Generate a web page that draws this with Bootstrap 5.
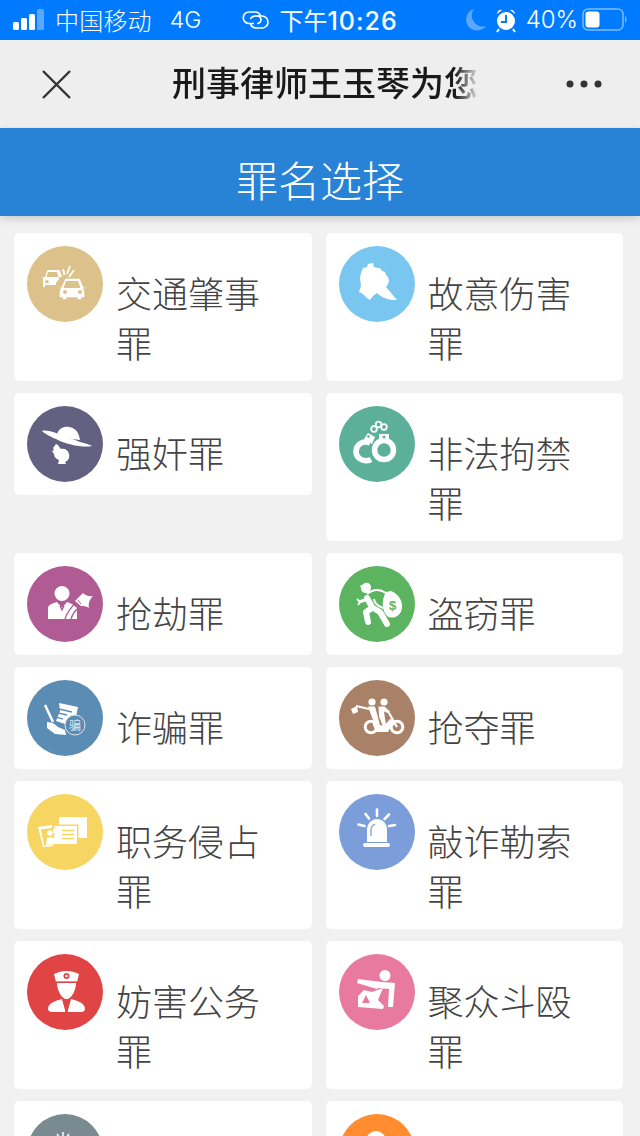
<!DOCTYPE html>
<html lang="zh-CN">
<head>
    <meta charset="UTF-8">
    <meta name="viewport" content="width=device-width, initial-scale=1.0">
    <title>罪名选择</title>
    <link href="https://cdn.jsdelivr.net/npm/bootstrap@5.3.0/dist/css/bootstrap.min.css" rel="stylesheet">
    <style>
        html, body { height: 1136px; overflow: hidden; }
        body { background-color: #f1f1f1; font-family: "Noto Sans CJK SC", "Liberation Sans", sans-serif; }
        .status-bar { height: 40px; background-color: #007aff; color: #fff; font-size: 24px; line-height: 40px; padding-left: 13px; white-space: nowrap; }
        .status-bar .latin { font-family: Inter, "Liberation Sans", sans-serif; }
        .carrier { margin-left: 9px; letter-spacing: .2px; font-weight: 300; }
        .net { margin-left: 18px; font-size: 23px; font-weight: 300; }
        .link-ico { margin-left: 41px; }
        .clock { margin-left: 10px; font-weight: 400; }
        .clock .latin { font-weight: 500; font-size: 25px; letter-spacing: 1px; }
        .moon-ico { margin-left: 68px; }
        .alarm-ico { margin-left: 9px; }
        .batt-text { margin-left: 9px; font-size: 24px; font-weight: 300; }
        .batt-ico { margin-left: 4px; }
        .title-bar { height: 88px; background-color: #eee; padding-left: 41px; }
        .title-text { margin: -4px 0 0 100px; width: 311px; font-size: 34px; line-height: 44px; font-weight: 500; color: #1a1a1a; white-space: nowrap; -webkit-mask-image: linear-gradient(to right, #000 91%, transparent 99%); mask-image: linear-gradient(to right, #000 91%, transparent 99%); }
        .dots-ico { margin-left: 83px; }
        .page-head { height: 88px; background-color: #2882d6; color: #fff; font-size: 42px; font-weight: 300; line-height: 102px; text-align: center; box-shadow: 0 3px 8px rgba(0, 0, 0, .16); position: relative; }
        .crime-list { padding: 17px 17px 0 14px; }
        .crime-list .row { --bs-gutter-x: 14px; --bs-gutter-y: 0; }
        .crime-card { border: 0; border-radius: 5px; background-color: #fff; padding: 13px 13px 12.5px; margin-bottom: 12.5px; }
        .crime-ico { width: 76px; height: 76px; flex: none; display: block; }
        .crime-name { width: 170px; margin: 20.5px 0 1.5px 13px; font-size: 36px; line-height: 50px; font-weight: 300; color: #444; }
    </style>
</head>
<body>

<div class="status-bar d-flex align-items-center">
    <svg width="33" height="22" viewBox="0 0 33 22"><g fill="#fff"><rect x="0" y="13" width="6" height="8" rx="1.5"/><rect x="8" y="9" width="6" height="12" rx="1.5"/><rect x="16" y="5" width="6" height="16" rx="1.5"/></g><rect x="24" y="0" width="7" height="21" rx="1.5" fill="#5aa8ff"/></svg>
    <span class="carrier">中国移动</span>
    <span class="net latin">4G</span>
    <svg class="link-ico" width="27" height="18" viewBox="0 0 27 18" fill="none" stroke="#fff" stroke-width="1.700"><path d="M12 12.500H7a5.700 5.700 0 0 1 0-11.500h6a5.700 5.700 0 0 1 5.500 4"/><path d="M15 5h5a5.800 5.800 0 0 1 0 12h-6a5.700 5.700 0 0 1-5.500-4.500"/><path d="M8.500 8A5 5 0 0 1 13 5h2a4 4 0 0 1 4 4 4 4 0 0 1-4 3.500"/></svg>
    <span class="clock">下午<span class="latin">10:26</span></span>
    <svg class="moon-ico" width="20" height="24" viewBox="0 0 20 24"><path d="M8 1a11 11 0 1 0 12 17A11 11 0 0 1 8 1z" fill="#5aa8ff"/></svg>
    <svg class="alarm-ico" width="22" height="26" viewBox="0 0 22 26"><circle cx="11" cy="14" r="9" fill="#fff"/><path d="M2 7a4 4 0 0 1 5-4zM20 7a4 4 0 0 0-5-4z" fill="#fff"/><path d="M11 8v7h-5" fill="none" stroke="#007aff" stroke-width="2"/><path d="M4 22l-2 3M18 22l2 3" stroke="#fff" stroke-width="2"/></svg>
    <span class="batt-text latin">40%</span>
    <svg class="batt-ico" width="46" height="24" viewBox="0 0 46 24"><rect x="1" y="1" width="40" height="21" rx="5" fill="none" stroke="#7fbcff" stroke-width="1.500"/><rect x="3.500" y="3.500" width="14" height="16" rx="3" fill="#fff"/><path d="M43 8c2 1 2 6 0 7z" fill="#7fbcff"/></svg>
</div>

<div class="title-bar d-flex align-items-center">
    <svg width="31" height="31" viewBox="0 0 31 31"><path d="M2 2l27 27M29 2L2 29" stroke="#333" stroke-width="2.400"/></svg>
    <div class="title-text">刑事律师王玉琴为您</div>
    <svg class="dots-ico" width="36" height="8" viewBox="0 0 36 8"><g fill="#333"><circle cx="4" cy="4" r="3.500"/><circle cx="18" cy="4" r="3.500"/><circle cx="32" cy="4" r="3.500"/></g></svg>
</div>

<div class="page-head">罪名选择</div>

<div class="crime-list">
    <div class="row align-items-start">

        <div class="col-6">
            <div class="card crime-card flex-row">
                <svg class="crime-ico" viewBox="0 0 76 76"><circle cx="38" cy="38" r="38" fill="#dcc28a"/>
                    <path fill="#fff" fill-rule="evenodd" d="M18 31l2-6c0-1 1-1 2-1h9c1 0 2 0 2 1l2 6h-3v2l-3 4v2h-11v2h-2v-9l-1-1zM21 26l-1.500 5h12l-1.500-5zM20 34a1.800 1.800 0 1 0 0 3.600 1.800 1.800 0 0 0 0-3.600z"/>
                    <path fill="#fff" stroke="#dcc28a" stroke-width="1.500" d="M31 41h3l3-7c0-1 1-2 2-2h13c1 0 2 1 2 2l3 7h3v2h-3l1 2v7h-3v2h-5v-2H40v2h-5v-2h-3v-7l1-2h-2z"/>
                    <path fill="#dcc28a" d="M39 35l-2.500 7h17l-2.500-7z"/>
                    <circle cx="38" cy="46" r="2" fill="#dcc28a"/><circle cx="53" cy="46" r="2" fill="#dcc28a"/>
                    <path d="M36 23l1.500 6M43 20l-3 8M47 24l-5 7" stroke="#fff" stroke-width="1.800" fill="none"/></svg>
                <div class="crime-name">交通肇事罪</div>
            </div>
        </div>
        <div class="col-6">
            <div class="card crime-card flex-row">
                <svg class="crime-ico" viewBox="0 0 76 76"><circle cx="38" cy="38" r="38" fill="#79c7f0"/>
                    <path fill="#fff" d="M24 22l4-1 1-3 5-1 1 4 4 1 2 0 2 3 3 1 1 3 2 2 1 4-1 3-2 3 11 13-5 0c-6-1-11-3-15-7l-4 3-3 4-3-2-4-4-4-2 2-6-1-8 1-5z"/></svg>
                <div class="crime-name">故意伤害罪</div>
            </div>
        </div>

        <div class="col-6">
            <div class="card crime-card flex-row">
                <svg class="crime-ico" viewBox="0 0 76 76"><circle cx="38" cy="38" r="38" fill="#646082"/>
                    <path fill="#fff" d="M30 29c1-7 8-9 12-8 7 1 10 6 11 13-8-1-16-2-23-5z"/>
                    <path fill="#fff" d="M15 25c2-1 9 0 14 2 8 3 17 6 24 9 5 1 10 3 12 4-8 2-25-1-36-7-7-3-12-6-14-8z"/>
                    <path fill="#fff" d="M26 42l3-4 2 1 2 3 1 1c4-1 7 1 8 5 1 4-1 7-4 8l1 2h-8l1-4c-3-1-5-3-5-6l-2-3 2-1z"/></svg>
                <div class="crime-name">强奸罪</div>
            </div>
        </div>
        <div class="col-6">
            <div class="card crime-card flex-row">
                <svg class="crime-ico" viewBox="0 0 76 76"><circle cx="38" cy="38" r="38" fill="#5cb09a"/>
                    <path d="M31 37c-8-3-14 2-14 8.500s6 10 12 9c1 0 2-.5 3-1" fill="none" stroke="#fff" stroke-width="5.500"/>
                    <path fill="#fff" d="M25 33l4-6 7 4-3 7z"/>
                    <circle cx="45" cy="44" r="9.500" fill="none" stroke="#fff" stroke-width="5.500"/>
                    <path fill="#fff" d="M40 28h10v8H40z"/><circle cx="45" cy="31" r="1.500" fill="#5cb09a"/><circle cx="29.500" cy="30.500" r="1.300" fill="#5cb09a"/>
                    <g fill="none" stroke="#fff" stroke-width="1.800"><circle cx="35" cy="23" r="2.800"/><circle cx="39.500" cy="18.500" r="2.800"/><circle cx="45" cy="21" r="2.800"/></g></svg>
                <div class="crime-name">非法拘禁罪</div>
            </div>
        </div>

        <div class="col-6">
            <div class="card crime-card flex-row">
                <svg class="crime-ico" viewBox="0 0 76 76"><circle cx="38" cy="38" r="38" fill="#b05b93"/>
                    <circle cx="35" cy="27.500" r="7.500" fill="#fff"/>
                    <path fill="#fff" d="M21 53V42c0-3 5-5 9-6l5 6 5-6 5 2 5 4v11z"/>
                    <path d="M33 40l2 4 2-4M38 53c2-7 7-13 13-18M44 53c1-4 3-7 6-10" stroke="#b05b93" stroke-width="1.300" fill="none"/>
                    <path fill="#fff" d="M48 35l8-8c2 2 6 4 10 3-3 3-5 7-4 12-3-2-6-2-8-2z"/>
                    <path d="M51 34l3 4" stroke="#b05b93" stroke-width="1"/></svg>
                <div class="crime-name">抢劫罪</div>
            </div>
        </div>
        <div class="col-6">
            <div class="card crime-card flex-row">
                <svg class="crime-ico" viewBox="0 0 76 76"><circle cx="38" cy="38" r="38" fill="#5cb360"/>
                    <path fill="#fff" d="M21 20l5-3c3-1 6 1 6 4 0 3-2 6-5 6-3 0-5-2-5-5z"/>
                    <path d="M28 32l5 9M33 42l-6 4 2 10M34 42l7 4 7 12" fill="none" stroke="#fff" stroke-width="6" stroke-linecap="round" stroke-linejoin="round"/>
                    <path d="M29 33l-9 3" stroke="#fff" stroke-width="3"/><path d="M18 33l3 3-2 3" stroke="#fff" stroke-width="1.800" fill="none"/>
                    <path d="M28 28c6-5 13-5 19-1" fill="none" stroke="#fff" stroke-width="2"/>
                    <path d="M35 33c0 3 3 7 9 9" fill="none" stroke="#fff" stroke-width="2"/>
                    <path fill="#fff" d="M47 26c-4 6-5 18 1 24 6 4 14 0 15-8 1-8-5-15-11-17z"/>
                    <text x="50" y="44" font-size="13" font-weight="700" fill="#5cb360" font-family="Liberation Sans, sans-serif">$</text></svg>
                <div class="crime-name">盗窃罪</div>
            </div>
        </div>

        <div class="col-6">
            <div class="card crime-card flex-row">
                <svg class="crime-ico" viewBox="0 0 76 76"><circle cx="38" cy="38" r="38" fill="#5b8cb3"/>
                    <path d="M18 25l8 17" stroke="#fff" stroke-width="2.500"/>
                    <path fill="#fff" d="M32 23l19 4-2 10-8 8-12-4 4-10z"/>
                    <path d="M32 29l13 3M31 33l9 2M29 37l7 2" stroke="#5b8cb3" stroke-width="1.300"/>
                    <path fill="#fff" d="M20 42l6 1 5 4 7 3 1 5-11-1-8-6z"/>
                    <circle cx="48" cy="45" r="10" fill="#5b8cb3" stroke="#dbe6ee" stroke-width="1"/>
                    <text x="48" y="49.500" text-anchor="middle" font-size="12" fill="#dbe6ee" font-family="Noto Sans CJK SC, sans-serif">骗</text></svg>
                <div class="crime-name">诈骗罪</div>
            </div>
        </div>
        <div class="col-6">
            <div class="card crime-card flex-row">
                <svg class="crime-ico" viewBox="0 0 76 76"><circle cx="38" cy="38" r="38" fill="#a98166"/>
                    <path fill="#fff" d="M12 29l6-3 1 6-5 2z"/>
                    <circle cx="33" cy="22" r="3.600" fill="#fff"/><circle cx="45" cy="22" r="3.600" fill="#fff"/>
                    <path d="M17 26l13 3" stroke="#fff" stroke-width="2" fill="none"/>
                    <path fill="#fff" d="M29 26.500h7l3 11 2 8-4 1-4-9zM39.500 26.500h6l5.500 5-1 2-5-2 1 7 1 6-3 2-4-10z"/>
                    <path fill="#fff" d="M33 40l4 4 8 2 6-7 3 1 2 5-4 1-3 6H37l-3-7z"/>
                    <circle cx="32" cy="47" r="5.800" fill="none" stroke="#fff" stroke-width="3"/><circle cx="58" cy="47" r="5.800" fill="none" stroke="#fff" stroke-width="3"/>
                    <path d="M50 33l8 14" stroke="#fff" stroke-width="2.200"/></svg>
                <div class="crime-name">抢夺罪</div>
            </div>
        </div>

        <div class="col-6">
            <div class="card crime-card flex-row">
                <svg class="crime-ico" viewBox="0 0 76 76"><circle cx="38" cy="38" r="38" fill="#f6d562"/>
                    <rect x="32" y="23" width="28" height="21" fill="#fff"/>
                    <path fill="#fff" d="M11 33l14-2 .5 2h-1L27 52l-11 1z"/>
                    <rect x="25.500" y="30.500" width="26" height="21" fill="#f6d562"/>
                    <rect x="27" y="32" width="23" height="18" fill="#fff"/>
                    <path fill="#f6d562" d="M14 35.500l11-1.500.5 2 1.500 14-10 1.500z"/>
                    <circle cx="23" cy="39" r="2.800" fill="#fff"/>
                    <path fill="#fff" d="M19 51l1-7 3-1c2 0 4 1 4 2v5z"/>
                    <path fill="#f6d562" d="M27 33.500h3v3h-3zM27 38h3l-3 3z"/>
                    <circle cx="29" cy="37" r="3" fill="#fff"/>
                    <path d="M35 36.500h12M35 40.500h12M35 44.500h12" stroke="#f6d562" stroke-width="1.500"/></svg>
                <div class="crime-name">职务侵占罪</div>
            </div>
        </div>
        <div class="col-6">
            <div class="card crime-card flex-row">
                <svg class="crime-ico" viewBox="0 0 76 76"><circle cx="38" cy="38" r="38" fill="#7b9dd9"/>
                    <path fill="#fff" d="M28 48V36c0-6 4-11 10-11s10 5 10 11v12z"/>
                    <path d="M32 42v-6c0-3 2-5 4-6" stroke="#7b9dd9" stroke-width="1.300" fill="none"/>
                    <rect x="24" y="49" width="27" height="4" rx="2" fill="#fff"/>
                    <path d="M38 15.500v6.500M26.500 20l3.500 4.500M50 20.500L45.500 25M19.500 30.500l6 1.500M56 31l-6 1" stroke="#fff" stroke-width="2.600" stroke-linecap="round"/></svg>
                <div class="crime-name">敲诈勒索罪</div>
            </div>
        </div>

        <div class="col-6">
            <div class="card crime-card flex-row">
                <svg class="crime-ico" viewBox="0 0 76 76"><circle cx="38" cy="38" r="38" fill="#e04444"/>
                    <path fill="#fff" d="M27 20c8-4 17-4 25 0l-2 8H29z"/>
                    <path fill="#fff" d="M30 29h19c0 7-4 14-8 16h-3c-4-2-8-9-8-16z"/>
                    <path d="M29 28h21" stroke="#e04444" stroke-width="1.200"/>
                    <circle cx="39.500" cy="22" r="3" fill="#e04444"/><circle cx="39.500" cy="22" r="1.200" fill="#fff"/>
                    <path fill="#fff" d="M21 55c0-6 7-8 14-10l4 13h-14c-2 0-4-1-4-3zM58 55c0-6-7-8-14-10l-4 13h14c2 0 4-1 4-3z"/>
                    <path d="M36 46l3 12M43 46l-3 12" stroke="#e04444" stroke-width="1"/><path d="M39.500 46v12" stroke="#e04444" stroke-width="1.800"/></svg>
                <div class="crime-name">妨害公务罪</div>
            </div>
        </div>
        <div class="col-6">
            <div class="card crime-card flex-row">
                <svg class="crime-ico" viewBox="0 0 76 76"><circle cx="38" cy="38" r="38" fill="#e8799f"/>
                    <circle cx="46" cy="21.500" r="5.500" fill="#fff"/>
                    <path fill="#fff" d="M19 25l24 3 13 1-2 24h-5l1-18-11-1-1 1-20-6z"/>
                    <path fill="#fff" fill-rule="evenodd" d="M19 53V42l6-6 8 2 11-4-5 12 6 6-1 3zM27 41l-4 8h8z"/></svg>
                <div class="crime-name">聚众斗殴罪</div>
            </div>
        </div>

        <div class="col-6">
            <div class="card crime-card flex-row">
                <svg class="crime-ico" viewBox="0 0 76 76"><circle cx="38" cy="38" r="38" fill="#798a90"/>
                    <path d="M36 18v4M30 20l2 3M42 20l-2 3" stroke="#fff" stroke-width="1.500"/></svg>
            </div>
        </div>
        <div class="col-6">
            <div class="card crime-card flex-row">
                <svg class="crime-ico" viewBox="0 0 76 76"><circle cx="38" cy="38" r="38" fill="#ff8c2e"/>
                    <circle cx="37" cy="27" r="10" fill="#fff"/></svg>
            </div>
        </div>

    </div>
</div>

<script src="https://cdn.jsdelivr.net/npm/bootstrap@5.3.0/dist/js/bootstrap.bundle.min.js"></script>
</body>
</html>
